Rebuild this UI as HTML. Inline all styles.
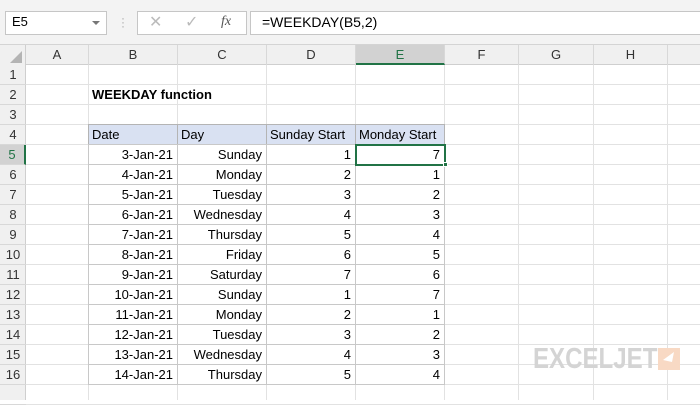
<!DOCTYPE html><html><head><style>
body{margin:0;width:700px;height:400px;overflow:hidden;background:#fff;font-family:"Liberation Sans",Arial,sans-serif;font-size:13px;position:relative}
div{position:absolute;box-sizing:border-box}
.t{white-space:nowrap;line-height:20px}
</style></head><body>
<div style="left:0;top:0;width:700px;height:45px;background:#f3f3f3;border-bottom:1px solid #d4d4d4"></div>
<div style="left:5px;top:11px;width:102px;height:24px;background:#fff;border:1px solid #c6c6c6"></div>
<div class="t" style="left:12px;top:12px">E5</div>
<div style="left:92px;top:21px;width:0;height:0;border-left:4px solid transparent;border-right:4px solid transparent;border-top:4px solid #777"></div>
<div style="left:121px;top:16px;color:#aaa;font-size:12px;line-height:4px">·<br>·<br>·</div>
<div style="left:137px;top:11px;width:110px;height:24px;background:#fff;border:1px solid #c6c6c6"></div>
<div class="t" style="left:149px;top:13px;color:#bbb;font-size:16px">✕</div>
<div class="t" style="left:185px;top:13px;color:#bbb;font-size:16px">✓</div>
<div class="t" style="left:221px;top:12px;color:#555;font-style:italic;font-family:'Liberation Serif',serif;font-size:14px">fx</div>
<div style="left:250px;top:11px;width:455px;height:24px;background:#fff;border:1px solid #c6c6c6"></div>
<div class="t" style="left:262px;top:12px;font-size:14px">=WEEKDAY(B5,2)</div>
<div style="left:0;top:45px;width:700px;height:20px;background:#f0f0f0;border-bottom:1px solid #cfcfcf"></div>
<div style="left:0;top:45px;width:26px;height:355px;background:#f0f0f0;border-right:1px solid #cfcfcf"></div>
<div style="left:10px;top:51px;width:0;height:0;border-left:12px solid transparent;border-bottom:12px solid #b4b4b4"></div>
<div id="g"></div>
<script>
var cols=[26,89,178,267,356,445,519,594,668,742],names="ABCDEFGHI",h="";
for(var i=0;i<9;i++){var x=cols[i],w=cols[i+1]-x;
h+='<div class="t" style="left:'+x+'px;top:45px;width:'+w+'px;text-align:center;border-right:1px solid #d8d8d8;height:20px;color:#333'+(i==4?';background:#d2d2d2;border-bottom:2px solid #217346;color:#217346':'')+'">'+names[i]+'</div>';}
for(var r=1;r<=17;r++){var y=65+(r-1)*20;
h+='<div class="t" style="left:0;top:'+y+'px;width:26px;height:20px;text-align:center;border-bottom:1px solid #d8d8d8;color:#333'+(r==5?';background:#d2d2d2;border-right:2px solid #217346;color:#217346':'')+'">'+(r<17?r:'')+'</div>';
h+='<div style="left:26px;top:'+(y+19)+'px;width:674px;height:1px;background:#e2e2e2"></div>';}
for(var i=1;i<9;i++)h+='<div style="left:'+(cols[i]-1)+'px;top:65px;width:1px;height:335px;background:#e2e2e2"></div>';
h+='<div class="t" style="left:92px;top:85px;font-weight:bold">WEEKDAY function</div>';
var days=["Sunday","Monday","Tuesday","Wednesday","Thursday","Friday","Saturday"];
var hd=["Date","Day","Sunday Start","Monday Start"];
for(var c=0;c<4;c++)h+='<div class="t" style="left:'+(cols[c+1]-1)+'px;top:124px;width:90px;height:21px;background:#d9e1f2;border:1px solid #b4b4b4;padding-left:3px">'+hd[c]+'</div>';
for(var k=0;k<12;k++){var y=144+k*20,d=k+3,wd=k%7;
var v=[d+"-Jan-21",days[wd],wd+1,(wd+6)%7+1];
for(var c=0;c<4;c++)h+='<div class="t" style="left:'+(cols[c+1]-1)+'px;top:'+y+'px;width:90px;height:21px;border:1px solid #c8c8c8;text-align:right;padding-right:4px">'+v[c]+'</div>';}
h+='<div style="left:355px;top:144px;width:91px;height:22px;border:2px solid #217346"></div>';
h+='<div style="left:443px;top:162px;width:5px;height:5px;background:#217346;border:1px solid #fff"></div>';
document.getElementById("g").outerHTML=h;
</script>
<div style="left:533px;top:344px;font-weight:bold;font-size:29px;color:#d4d4d4;line-height:30px;transform:scaleX(0.83);transform-origin:0 0">EXCELJET</div>
<div style="left:658px;top:348px;width:22px;height:22px;background:#f8d9c4"></div>
<svg style="position:absolute;left:658px;top:348px" width="22" height="22"><path d="M16 4 L5 12 L14 14 Z" fill="#fff"/></svg>
</body></html>
